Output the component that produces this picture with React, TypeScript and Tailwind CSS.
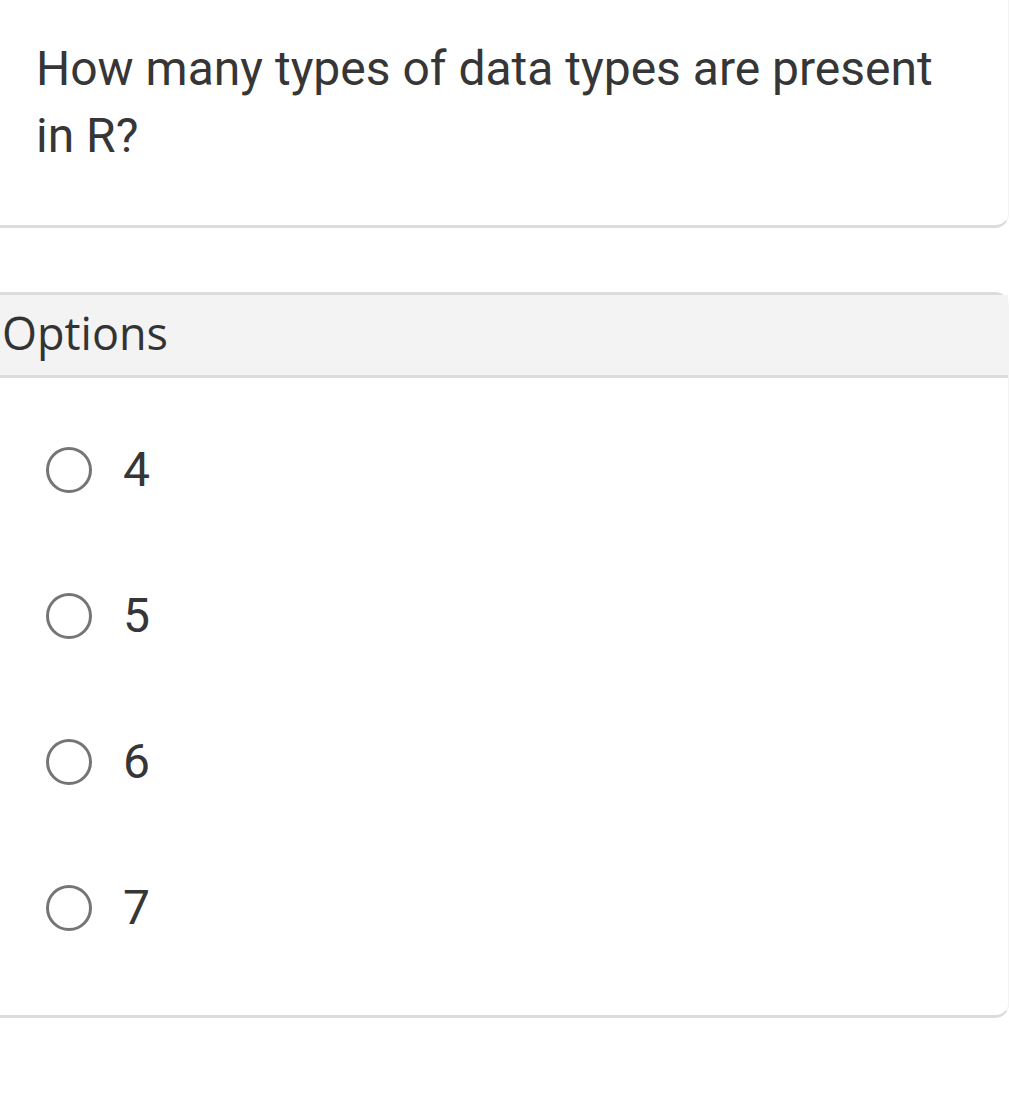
const options = ["4", "5", "6", "7"];

export default function App() {
  return (
    <div className="h-[1104px] w-[1010px] overflow-hidden bg-white font-['Roboto',sans-serif] text-[#333333]">
      {/* question card */}
      <section className="w-[1009px] rounded-br-[14px] border-r border-b-[3px] border-[#dcdcdc] border-r-[#f3f3f3] pt-[35px] pb-[56px] pl-[36px] pr-[40px]">
        <p className="text-[48px] leading-[67px] text-[#363636]">
          How many types of data types are present in R?
        </p>
      </section>

      {/* options card */}
      <section className="mt-[64px] w-[1009px] rounded-r-[14px] border-t-[3px] border-r border-b-[3px] border-[#dcdcdc] border-r-[#f3f3f3]">
        <div className="flex h-[83px] items-center border-b-[3px] border-[#dcdcdc] bg-[#f3f3f3] pb-[4px] pl-[2px] font-['Open_Sans',sans-serif] text-[45px]">
          Options
        </div>
        <ul className="pt-[19px] pb-[34px]">
          {options.map((o) => (
            <li key={o} className="flex h-[146px] items-center pl-[46px]">
              <span className="h-[46px] w-[46px] rounded-full border-[3px] border-[#757575]" />
              <span className="ml-[31px] text-[48px] leading-none text-[#363636]">{o}</span>
            </li>
          ))}
        </ul>
      </section>
    </div>
  );
}
